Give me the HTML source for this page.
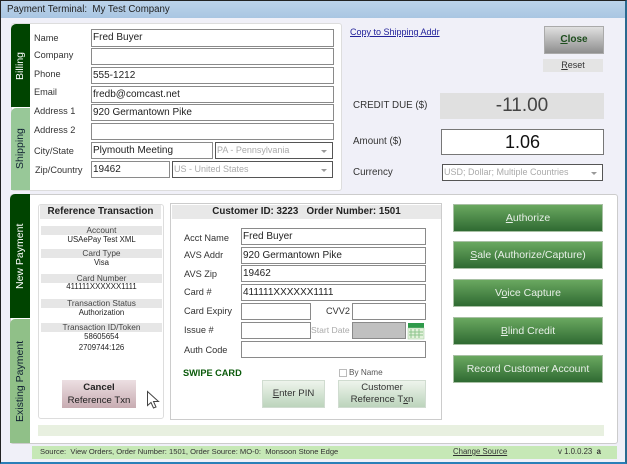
<!DOCTYPE html>
<html><head><meta charset="utf-8"><style>
html,body{margin:0;padding:0}
body{width:627px;height:464px;position:relative;overflow:hidden;background:#f0f0f8;font-family:"Liberation Sans",sans-serif;font-size:10px;color:#222}
div{position:absolute;box-sizing:border-box;white-space:nowrap}
.i{background:#fff;border:1px solid #8a8a8a;font-size:10px;line-height:16px;padding-left:1px;color:#222}
.s{background:#fff;border:1px solid #555;font-size:9px;line-height:15px;color:#aaa;padding-left:1px}
.s:after{content:"";position:absolute;right:5px;top:7px;border:3px solid transparent;border-top:3px solid #999}
.l{font-size:9.2px;line-height:12px;color:#333}
.t{color:#fff;writing-mode:vertical-rl;transform:rotate(180deg);text-align:center;font-size:10.5px}
.g{background:linear-gradient(#6aa860,#2f6a32);border:1px solid #a8c0a4;color:#e8f0e8;font-size:10.5px;text-align:center;left:453px;width:150px;height:28px;line-height:26px}
.h{background:#e6e6e6;left:41px;width:121px;height:9px;text-align:center;font-size:8.3px;line-height:9px;color:#444}
.v{left:41px;width:121px;text-align:center;font-size:7.8px;line-height:10px;color:#222}
.b{background:linear-gradient(#eef4ec,#bcd4bc);text-align:center;font-size:9.6px;color:#333;border:1px solid #d0dcd0}
</style></head><body>
<div style="left:0;top:0;width:627px;height:464px;border:1px solid #222;border-bottom:2px solid #2a7fb8;border-right:2px solid #2a6a90"></div>
<div style="left:1px;top:1px;width:624px;height:17px;background:linear-gradient(#bcd3ea,#a9c6e2);font-size:9.7px;line-height:18px;padding-left:6px;color:#222">Payment Terminal:&nbsp; My Test Company</div>

<div style="left:11px;top:23px;width:331px;height:168px;background:#fff;border:1px solid #ddd;border-radius:3px"></div>
<div class="t" style="left:11px;top:24px;width:19px;height:83px;background:#004400;line-height:19px;border-radius:0 0 5px 0">Billing</div>
<div class="t" style="left:11px;top:108px;width:19px;height:82px;background:#98c898;color:#123;line-height:19px;border-radius:0 0 5px 0">Shipping</div>

<div class="l" style="left:34px;top:32px">Name</div>
<div class="l" style="left:34px;top:49px">Company</div>
<div class="l" style="left:34px;top:68px">Phone</div>
<div class="l" style="left:34px;top:86px">Email</div>
<div class="l" style="left:34px;top:105px">Address 1</div>
<div class="l" style="left:34px;top:124px">Address 2</div>
<div class="l" style="left:34px;top:145px">City/State</div>
<div class="l" style="left:35px;top:164px">Zip/Country</div>

<div class="i" style="left:91px;top:29px;width:243px;height:18px">Fred Buyer</div>
<div class="i" style="left:91px;top:48px;width:243px;height:17px"></div>
<div class="i" style="left:91px;top:67px;width:243px;height:17px">555-1212</div>
<div class="i" style="left:91px;top:86px;width:243px;height:17px">fredb@comcast.net</div>
<div class="i" style="left:91px;top:104px;width:243px;height:17px">920 Germantown Pike</div>
<div class="i" style="left:91px;top:123px;width:243px;height:17px"></div>
<div class="i" style="left:91px;top:142px;width:122px;height:17px">Plymouth Meeting</div>
<div class="s" style="left:215px;top:142px;width:118px;height:17px">PA - Pennsylvania</div>
<div class="i" style="left:91px;top:161px;width:79px;height:17px">19462</div>
<div class="s" style="left:172px;top:161px;width:161px;height:17px">US - United States</div>

<div style="left:350px;top:27px;font-size:9px;color:#22229a;text-decoration:underline">Copy to Shipping Addr</div>
<div style="left:544px;top:26px;width:60px;height:28px;background:linear-gradient(#e0e0e0,#8e8e8e);border:1px solid #aaa;text-align:center;font-weight:bold;font-size:10px;line-height:26px;color:#1d4d1d"><u>C</u>lose</div>
<div style="left:543px;top:59px;width:60px;height:13px;background:#e4e4e4;text-align:center;font-size:9px;line-height:13px;color:#333"><u>R</u>eset</div>
<div class="l" style="left:353px;top:100px;font-size:9.8px">CREDIT DUE ($)</div>
<div style="left:440px;top:93px;width:164px;height:26px;background:#e0e0e0;text-align:center;font-size:19px;line-height:25px;color:#444">-11.00</div>
<div class="l" style="left:353px;top:136px;font-size:9.8px">Amount ($)</div>
<div style="left:441px;top:129px;width:163px;height:26px;background:#fff;border:1px solid #777;text-align:center;font-size:18px;line-height:24px;color:#111">1.06</div>
<div class="l" style="left:353px;top:167px;font-size:9.8px">Currency</div>
<div class="s" style="left:442px;top:164px;width:161px;height:17px">USD; Dollar; Multiple Countries</div>

<div style="left:10px;top:194px;width:608px;height:250px;background:#fff;border:1px solid #ccc;border-radius:3px"></div>
<div class="t" style="left:10px;top:194px;width:20px;height:124px;background:#004400;line-height:20px;border-radius:0 0 5px 0">New Payment</div>
<div class="t" style="left:10px;top:319px;width:20px;height:124px;background:#90c088;color:#123;line-height:20px;border-radius:0 0 5px 0">Existing Payment</div>

<div style="left:38px;top:204px;width:126px;height:215px;background:#fff;border:1px solid #ddd;border-radius:3px"></div>
<div style="left:40px;top:205px;width:121px;height:14px;background:#e8e8e8;text-align:center;font-weight:bold;font-size:9.9px;line-height:14px;color:#222">Reference Transaction</div>
<div class="h" style="top:226px">Account</div><div class="v" style="top:235px">USAePay Test XML</div>
<div class="h" style="top:249px">Card Type</div><div class="v" style="top:258px">Visa</div>
<div class="h" style="top:274px">Card Number</div><div class="v" style="top:282px">411111XXXXXX1111</div>
<div class="h" style="top:299px">Transaction Status</div><div class="v" style="top:308px">Authorization</div>
<div class="h" style="top:323px">Transaction ID/Token</div><div class="v" style="top:332px">58605654</div><div class="v" style="top:343px">2709744:126</div>
<div style="left:62px;top:380px;width:74px;height:28px;background:linear-gradient(#ecdfe2,#c8acb2);text-align:center;font-size:9.6px;line-height:13px;padding-top:1px;color:#222"><b>Cancel</b><br>Reference Txn</div>
<svg style="position:absolute;left:146px;top:390px" width="14" height="20" viewBox="0 0 14 20"><path d="M1.5 1.5V15.5L5 12.5L7.5 18L10 17L7.5 11.5H12.5Z" fill="#fff" stroke="#444" stroke-width="1"/></svg>

<div style="left:170px;top:203px;width:272px;height:217px;background:#fff;border:1px solid #ccc"></div>
<div style="left:172px;top:205px;width:269px;height:14px;background:#e8e8e8;text-align:center;font-weight:bold;font-size:9.8px;line-height:14px;color:#222">Customer ID: 3223 &nbsp; Order Number: 1501</div>
<div class="l" style="left:184px;top:232px">Acct Name</div>
<div class="l" style="left:184px;top:249px">AVS Addr</div>
<div class="l" style="left:184px;top:268px">AVS Zip</div>
<div class="l" style="left:184px;top:286px">Card #</div>
<div class="l" style="left:184px;top:305px">Card Expiry</div>
<div class="l" style="left:184px;top:324px">Issue #</div>
<div class="l" style="left:184px;top:344px">Auth Code</div>
<div class="l" style="left:326px;top:305px">CVV2</div>
<div class="l" style="left:311px;top:324px;color:#aaa;font-size:8.6px">Start Date</div>
<div class="i" style="left:241px;top:228px;width:185px;height:17px">Fred Buyer</div>
<div class="i" style="left:241px;top:247px;width:185px;height:17px">920 Germantown Pike</div>
<div class="i" style="left:241px;top:265px;width:185px;height:17px">19462</div>
<div class="i" style="left:241px;top:284px;width:185px;height:17px">411111XXXXXX1111</div>
<div class="i" style="left:241px;top:303px;width:70px;height:17px"></div>
<div class="i" style="left:352px;top:303px;width:74px;height:17px"></div>
<div class="i" style="left:241px;top:322px;width:70px;height:17px"></div>
<div class="i" style="left:352px;top:322px;width:54px;height:17px;background:#c0c0c0"></div>
<svg style="position:absolute;left:407px;top:322px" width="18" height="18" viewBox="0 0 18 18"><rect x="1" y="1" width="16" height="5" fill="#2e9a4a"/><rect x="1" y="6" width="16" height="11" fill="#e4f2dc" stroke="#9ec89e" stroke-width=".5"/><path d="M4 7V16M8 7V16M12 7V16M2 10H16M2 13H16" stroke="#8cc48c" stroke-width="1"/></svg>
<div class="i" style="left:241px;top:341px;width:185px;height:17px"></div>
<div style="left:183px;top:368px;font-size:9.2px;font-weight:bold;color:#0a5a0a">SWIPE CARD</div>
<div style="left:339px;top:369px;width:8px;height:8px;border:1px solid #bbb;background:#fff"></div>
<div style="left:349px;top:368px;font-size:8.2px;color:#555">By Name</div>
<div class="b" style="left:262px;top:380px;width:63px;height:28px;line-height:25px"><u>E</u>nter PIN</div>
<div class="b" style="left:338px;top:380px;width:88px;height:28px;line-height:12px;padding-top:1px">Customer<br>Reference T<u>x</u>n</div>

<div class="g" style="top:204px"><u>A</u>uthorize</div>
<div class="g" style="top:241px"><u>S</u>ale (Authorize/Capture)</div>
<div class="g" style="top:279px">V<u>o</u>ice Capture</div>
<div class="g" style="top:317px"><u>B</u>lind Credit</div>
<div class="g" style="top:355px">Record Customer Account</div>

<div style="left:38px;top:425px;width:566px;height:11px;background:#e8f0e0"></div>
<div style="left:32px;top:446px;width:585px;height:13px;background:#c6e8b6;font-size:7.6px;line-height:12px;padding-left:8px;color:#333">Source:&nbsp; View Orders, Order Number: 1501, Order Source: MO-0:&nbsp; Monsoon Stone Edge</div>
<div style="left:453px;top:446px;font-size:7.8px;line-height:12px;color:#333;text-decoration:underline">Change Source</div>
<div style="left:558px;top:446px;font-size:7.8px;line-height:12px;color:#333">v 1.0.0.23&nbsp; <b>a</b></div>
</body></html>
